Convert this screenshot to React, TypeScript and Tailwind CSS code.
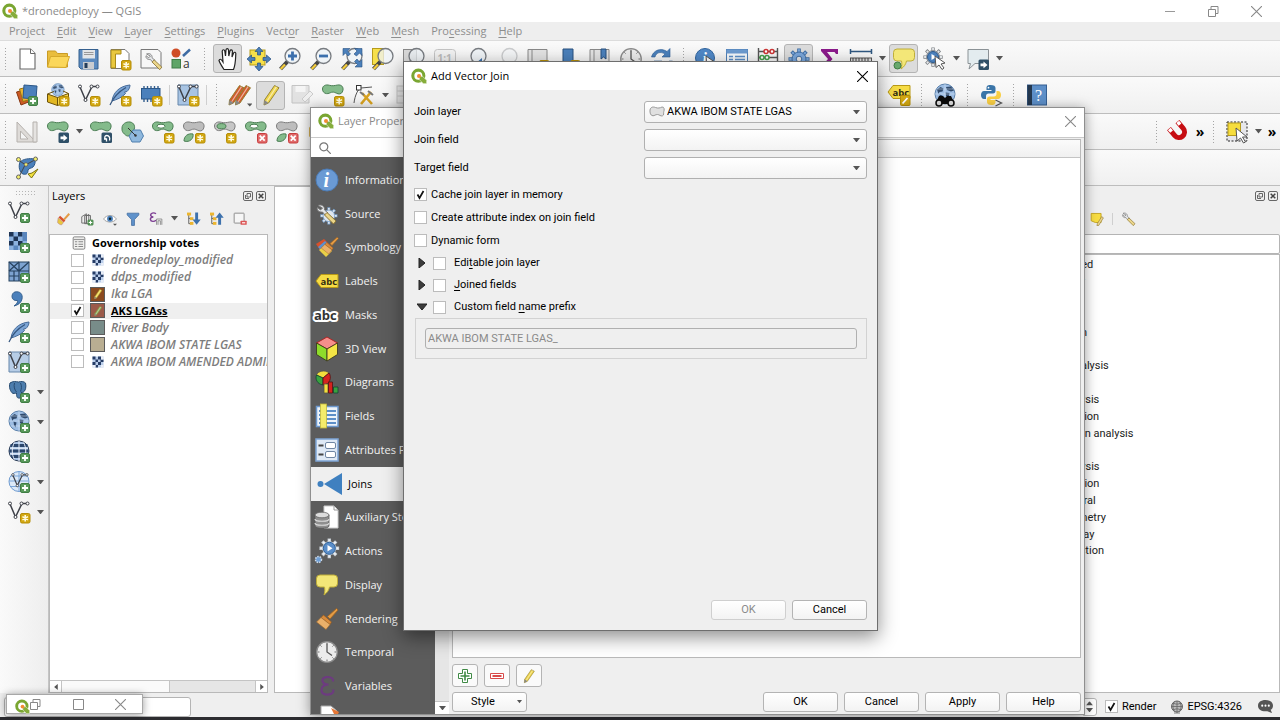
import React, { useState } from "react";

type Kids = { children?: React.ReactNode };

/* ---------- icon primitives ---------- */

function Svg({ children, cls = "size-6" }: Kids & { cls?: string }) {
  return (
    <svg viewBox="0 0 24 24" className={`${cls} shrink-0`} fill="none" aria-hidden="true">
      {children}
    </svg>
  );
}

const Plus = () => (
  <g>
    <rect x="13.5" y="13.5" width="9" height="9" rx="1.5" fill="#5a9a5c" stroke="#3f7d43" />
    <path d="M18 15v6M15 18h6" stroke="#fff" strokeWidth="1.8" />
  </g>
);
const Star = () => (
  <g>
    <rect x="13.5" y="13.5" width="9.5" height="9.5" rx="1.5" fill="#d3a812" stroke="#b58d07" />
    <path d="M18.2 15v6.4M15.4 16.6l5.6 3.2M21 16.6l-5.6 3.2" stroke="#fffbe0" strokeWidth="1.6" />
  </g>
);
const Cross = () => (
  <g>
    <rect x="13.5" y="13.5" width="9.5" height="9.5" rx="1.5" fill="#e06a6a" stroke="#c83c3c" />
    <path d="M15.7 15.7l5 5M20.7 15.7l-5 5" stroke="#fff" strokeWidth="1.8" />
  </g>
);
const ArrowBadge = () => (
  <g>
    <rect x="12.5" y="12.5" width="10.5" height="10.5" rx="1.5" fill="#2f5068" />
    <path d="M14.5 16.6h3v-2l4 3.3-4 3.3v-2h-3z" fill="#fff" />
  </g>
);

const Vee = () => (
  <g stroke="#3d4048" strokeWidth="1.5">
    <path d="M3 4l5.5 13L15 3.5h5" />
    <g fill="#fff" strokeWidth="1">
      <circle cx="3" cy="3.5" r="1.5" />
      <circle cx="8.5" cy="17" r="1.5" />
      <circle cx="14.5" cy="3.5" r="1.5" />
      <circle cx="20.5" cy="3.5" r="1.5" />
    </g>
  </g>
);
const Blob = ({ fill = "#84bb8b", stroke = "#4b7e54" }: { fill?: string; stroke?: string }) => (
  <path
    d="M1.500 6C1.500 2.500 5 1.300 8.500 2.300c3 .9 5.500.2 8-.3 4-.6 6 2 5.500 5s-2.500 4.500-5 3.800c-2.500-.8-4-2.300-6.500-1.500-1.800.6-3 1.500-5 1.300C3 10.300 1.500 8.500 1.500 6z"
    fill={fill}
    stroke={stroke}
  />
);
const Lens = ({ dim = false }: { dim?: boolean }) => (
  <g opacity={dim ? 0.35 : 1}>
    <path d="M9.500 14.500L2.500 22" stroke="#454545" strokeWidth="4" />
    <path d="M7 17.500L2.700 22" stroke="#f3cc3c" strokeWidth="2.400" />
    <circle cx="14.500" cy="9" r="7.500" fill="#eef3f7" fillOpacity=".75" stroke="#777b80" strokeWidth="1.300" />
  </g>
);
const Globe = ({ dark = false }: { dark?: boolean }) => (
  <g>
    <circle cx="12" cy="11" r="10" fill={dark ? "#a9c4e6" : "#9dbde3"} stroke={dark ? "#2b3d57" : "#5d83ad"} />
    {dark ? (
      <g>
        <path d="M3.500 5.500h17M2.300 11h19.400M4 16.500h16" stroke="#2b466c" strokeWidth="3" />
        <path d="M12 1v20M7.500 2.500c-3 5-3 12 0 17M16.500 2.500c3 5 3 12 0 17M3 8.200h18M3 13.800h18" stroke="#e9f0fa" strokeWidth="1" />
      </g>
    ) : (
      <g>
        <path d="M4 6.500l3.500-2.500 3 1.500-1 3-3 .5-1 2zM13 4l5-.5 3 4-3 1-4-1.500zM12.500 9.500l4 .5-1 5-2.500-2zM6.500 11.500l3 1-1 5-1.500-2.500z" fill="#314b6d" />
        <path d="M2 11h20M12 1v20M4 6h16M4 16h16" stroke="#dce8f6" strokeWidth=".5" />
      </g>
    )}
  </g>
);
const Feather = () => (
  <g>
    <path d="M4 18C5 10 11 3 22 2c0 3-1.500 5-3 6.500l-2.500.5 1 1.500C14 14.500 9 16.500 4 18z" fill="#7ba4d4" stroke="#456a99" />
    <path d="M2 22C5 15 11 8.500 18 4.500" stroke="#34557f" strokeWidth="1.200" />
  </g>
);
const Checks = () => (
  <g>
    <rect x="2" y="2" width="18" height="18" fill="#8db2df" />
    <path d="M2 2h4.500v4.500H2zM11 2h4.500v4.500H11zM6.500 6.500H11V11H6.500zM2 11h4.500v4.500H2zM11 11h4.500v4.500H11z" fill="#1f3555" />
    <path d="M15.500 2H20v9h-4.500zM6.500 15.500H11V20H6.500z" fill="#5a86bd" />
  </g>
);
const Pencil = ({ c = "#efd54b" }: { c?: string }) => (
  <g>
    <path d="M15.500 2.500l4.500 2.300L9.500 20 5 22l.5-5z" fill={c} stroke="#8f7d2e" strokeWidth=".9" />
    <path d="M17.500 3.700L7.500 19" stroke="#fff" strokeOpacity=".55" strokeWidth="1.200" />
    <path d="M5.500 17L5 22l4.500-2z" fill="#888" />
  </g>
);
const Wrench = () => (
  <g>
    <path d="M3 3.500c3-1.500 7 .5 6.500 4.500l3.500 3-2.500 2.500L7.500 10C4 10.500 1.500 8 2.500 5.500L5.500 8l2-2z" fill="#e4e6e8" stroke="#777" />
    <path d="M12 10.500l9 8.500-2.500 3-9-9z" fill="#ecd68a" stroke="#8a7434" />
  </g>
);
const Gear = ({ fill = "#7aa6da", stroke = "#3f6da3" }: { fill?: string; stroke?: string }) => (
  <g>
    <g stroke={stroke} strokeWidth="3.600">
      <path d="M12 1.500v21M1.500 12h21M4.600 4.600l14.800 14.800M19.400 4.600L4.600 19.400" />
    </g>
    <g stroke={fill} strokeWidth="2">
      <path d="M12 2.300v19.400M2.300 12h19.400M5.200 5.200l13.600 13.600M18.800 5.200L5.200 18.800" />
    </g>
    <circle cx="12" cy="12" r="7" fill={fill} stroke={stroke} />
  </g>
);
const Bubble = () => (
  <path
    d="M5 2h14q3.500 0 3.500 3.500v5q0 3.500-3.500 3.500h-4.500c-.5 3-2.500 6-5.500 8 1-3 1-5.500.5-8H5Q1.500 14 1.500 10.500v-5Q1.500 2 5 2z"
    fill="#f3e778"
    stroke="#bfae39"
  />
);
const Brush = () => (
  <g>
    <path d="M21.500 1.500L23 3l-8 9-2.500-2.500z" fill="#e39b45" stroke="#a0621d" strokeWidth=".8" />
    <path d="M8.500 8l8 7-1.500 2.500-9-7z" fill="#d98b3c" stroke="#94571a" strokeWidth=".6" />
    <path d="M6 10.500l9 7-4 5L1.500 15z" fill="#eab06a" stroke="#a56a29" strokeWidth=".6" />
  </g>
);
const Tag = () => (
  <g>
    <path d="M6 5.500h17v13H6L1 12z" fill="#f6dc45" stroke="#b99a17" />
    <text x="5.500" y="15.500" fontSize="9.500" fontWeight="700" fill="#322d12" fontFamily="Open Sans, sans-serif">abc</text>
  </g>
);
const Clock = () => (
  <g>
    <circle cx="12" cy="12" r="10.300" fill="#ececec" stroke="#8b8b8b" strokeWidth="1.200" />
    <path d="M12 3.500V12l5 3.500" stroke="#555" strokeWidth="1.300" />
    <path d="M12 2.500v2M12 19.500v2M2.500 12h2M19.500 12h2M5.300 5.300l1.300 1.300M18.700 5.300l-1.300 1.300M5.300 18.700l1.300-1.300M18.700 18.700l-1.300-1.300" stroke="#777" />
  </g>
);
const Page = () => <path d="M5 2h10.500L20 6.500V22H5z" fill="#fff" stroke="#666" strokeWidth="1.100" />;
const Cursor = () => <path d="M12 9l10 7-4 1 3 4-2 1.500-3-4.500-3 2.500z" fill="#fff" stroke="#555" strokeWidth="1" />;

function QLogo({ cls = "size-4" }: { cls?: string }) {
  return (
    <Svg cls={cls}>
      <circle cx="11" cy="11.500" r="8.300" stroke="#7aa632" strokeWidth="4.600" />
      <path d="M12.500 12.500h5l6 6v5h-5l-6-6z" fill="#86ad3b" stroke="#fff" strokeWidth=".8" />
      <circle cx="12" cy="12" r="3" fill="#f08c33" />
    </Svg>
  );
}

const icons: Record<string, React.ReactNode> = {
  page: (<g><Page /><path d="M15.500 2v4.500H20" fill="#fff" stroke="#666" /></g>),
  folder: (<g><path d="M1.500 4h8l2 2.500h10V20H1.500z" fill="#e9bd3d" stroke="#c99b25" /><path d="M1.500 20L4.500 9.500h19L20 20.500z" fill="#fbd75b" stroke="#d6a92c" /></g>),
  save: (<g><path d="M2 2.500h19V22H4l-2-2z" fill="#5b8abf" stroke="#35608f" /><rect x="5.500" y="3" width="12.500" height="8.500" fill="#e2e5e8" /><path d="M7 5.500h9.500M7 7.500h9.500" stroke="#999" /><rect x="6" y="15" width="11" height="7" fill="#c9ccd0" /><rect x="7.500" y="16" width="3" height="5" fill="#223c5a" /></g>),
  layoutNew: (<g><path d="M3 2.500h14l4 4V21.500H3z" fill="#fff" stroke="#777" /><path d="M3 3h10v4H7.500v14H3z" fill="#e9c83f" stroke="#a98b1b" /><Star /></g>),
  layouts: (<g><path d="M2 2.500h17l3 3V21H2z" fill="#f7f7f7" stroke="#777" /><g transform="translate(5 4) scale(.85)"><Wrench /></g></g>),
  style: (<g><circle cx="6" cy="6" r="4.500" fill="#cf4d26" /><path d="M13 9l7-6.500" stroke="#3e6ba3" strokeWidth="2.500" /><rect x="2" y="12.500" width="8.500" height="8.500" fill="#5fa568" stroke="#3e7c47" /><text x="13" y="21" fontSize="12" fill="#333" fontFamily="Open Sans, sans-serif">a</text></g>),
  hand: (<path d="M8 22.500c-2-3-4-6-5-9 .5-1.800 2-1.500 3 0l1 1.500-.8-11c.3-1.700 2.200-1.700 2.600 0L9.500 9 10 2.800c.3-1.700 2.200-1.600 2.500 0l.3 6.200L14 3.800c.5-1.500 2.300-1.200 2.400.3L16 10l1.600-4c.8-1.300 2.200-.8 2.200.6-.3 5 0 10-2.300 15.900z" fill="#fff" stroke="#222" strokeWidth="1.200" />),
  pan: (<g><rect x="3" y="3" width="15" height="15" fill="#f7e04a" stroke="#b69b1b" /><path d="M12 0l4 4.500h-2.500V8h-3V4.500H8zM12 24l4-4.500h-2.500V16h-3v3.500H8zM0 12l4.500-4v2.500H8v3H4.500V16zM24 12l-4.500-4v2.500H16v3h3.500V16z" fill="#4b80bb" stroke="#28507f" strokeWidth=".7" /></g>),
  zoomIn: (<g><Lens /><path d="M14.500 4.500v9M10 9h9" stroke="#3c70ad" strokeWidth="2.800" /></g>),
  zoomOut: (<g><Lens /><path d="M10 9h9" stroke="#3c70ad" strokeWidth="2.800" /></g>),
  zoomFull: (<g><Lens /><path d="M3 1.500h7L7.500 4l3 3L8 9 5.500 6 3 8.500zM22 1.500v7L19.500 6l-3 3L14 7l3-3-2.500-2.500zM22 20h-7l2.500-2.500-3-3L17 12l2.500 3 2.500-2.500z" fill="#4b80bb" stroke="#28507f" strokeWidth=".6" /></g>),
  zoomSel: (<g><rect x="1.500" y="1.500" width="11" height="16" fill="#f7e04a" stroke="#b69b1b" /><Lens /></g>),
  zoomLayer: (<g><rect x="1.500" y="2.500" width="13" height="15" fill="#d9d9d9" stroke="#888" /><Lens /></g>),
  zoomNative: (<g opacity=".45"><rect x="1.500" y="2.500" width="21" height="17" rx="3" fill="#eee" stroke="#888" /><text x="4.500" y="15" fontSize="10" fontWeight="700" fill="#777" fontFamily="Open Sans, sans-serif">1:1</text></g>),
  zoomLast: (<g><Lens /><path d="M12 16l6-5v3h5v5h-5v2z" fill="#3c70ad" /></g>),
  zoomNext: <Lens dim />,
  mapNew: (<g><path d="M2 2.500h19V22H2zM6 2.500V22" fill="#e3e3e3" stroke="#888" /><Star /></g>),
  bookNew: (<g><path d="M6 2h10v19l-5-4-5 4z" fill="#4b80bb" stroke="#28507f" /><Star /></g>),
  books: (<g><path d="M2 2.500h19V22H2zM6 2.500V22" fill="#e3e3e3" stroke="#888" /><path d="M13 2h5v10l-2.500-2-2.500 2z" fill="#4b80bb" stroke="#28507f" /></g>),
  clock: <Clock />,
  refresh: (<g fill="#4b80bb" stroke="#2d5c93" strokeWidth=".6"><path d="M1.500 10C3 4 10 0 17 4.500L20 1.500v8.500h-8l3-3C10 4 6 6 5 10z" /><path d="M22.500 14c-1.500 6-8.500 10-15.500 5.500L4 22.500V14h8l-3 3c5 3 9 1 10-3z" /></g>),
  identify: (<g><circle cx="11" cy="11" r="9.500" fill="#5088c7" stroke="#2f639d" /><text x="8.500" y="17" fontSize="16" fontStyle="italic" fontWeight="700" fill="#fff" fontFamily="Liberation Serif, serif">i</text><Cursor /></g>),
  table: (<g><rect x="1.500" y="2.500" width="21" height="19" fill="#f5f8fb" stroke="#4e80b8" /><path d="M1.500 2.500h21v4h-21z" fill="#6c9bd0" /><path d="M4 9.500h4M10 9.500h10M4 12.500h4M10 12.500h10M4 15.500h4M10 15.500h10M4 18.500h4M10 18.500h10" stroke="#5d8fc8" strokeWidth="1.600" /></g>),
  abacus: (<g><path d="M2.500 1v22M21.500 1v22M2.500 4.500h19M2.500 10.500h19M2.500 17h19" stroke="#555" strokeWidth="1.400" /><g fill="#fff" strokeWidth="1.500"><circle cx="10" cy="4.500" r="2" stroke="#cc3434" /><circle cx="16" cy="4.500" r="2" stroke="#cc3434" /><circle cx="6" cy="10.500" r="2" stroke="#47a04c" /><circle cx="11" cy="10.500" r="2" stroke="#47a04c" /><circle cx="16" cy="17" r="2" stroke="#4b80bb" /></g></g>),
  gear: (<g><Gear /><circle cx="12" cy="12" r="2.800" fill="#e8e8e8" stroke="#3f6da3" /></g>),
  sigma: (<path d="M3 2h17v5h-2l-1.500-2H9l5.500 7L8.500 19H17l2-2.500h2L19.500 22H3v-2l7-8-7-8z" fill="#8b1a8b" />),
  ruler: (<g><path d="M1.500 4.500h21M1.500 2v5M22.500 2v5" stroke="#2f5780" strokeWidth="1.500" /><rect x="1.500" y="11" width="21" height="8" fill="#ddd" stroke="#555" /><path d="M4 11v4M7 11v5M10 11v4M13 11v5M16 11v4M19 11v5" stroke="#444" /></g>),
  tip: (<g><Bubble /><circle cx="5.500" cy="18.500" r="3.500" fill="#69a96e" stroke="#3f7d43" /></g>),
  action: (<g><g transform="translate(-1 -1) scale(.92)"><Gear fill="#e4e7ea" stroke="#7c8084" /></g><circle cx="10" cy="10" r="5.500" fill="#4b80bb" stroke="#2b5788" /><path d="M8.500 7l5 3-5 3z" fill="#fff" /><Cursor /></g>),
  note: (<g><path d="M2 2.500h20.500v14H9L3 22l1.500-5.500H2z" fill="#e3ecef" stroke="#8b9296" /><ArrowBadge /></g>),
  dsm: (<g><path d="M1.500 9L12 6l4 12-10 4z" fill="#cc5a24" stroke="#873610" /><path d="M4.500 6L15 3.500l3 12-10 3z" fill="#e8b532" stroke="#9a7410" /><path d="M9 2l13 1-1 13-13-1z" fill="#4b80bb" stroke="#2b5788" /><Plus /></g>),
  gpkg: (<g><path d="M1.500 11l10 3.500v8l-10-3.500z" fill="#e2b722" stroke="#6c5207" /><path d="M11.500 14.500l11-4v8l-11 4z" fill="#f5d44b" stroke="#6c5207" /><g transform="translate(4.500 0) scale(.62)"><Globe /></g><path d="M1.500 11L8 8.500M22.500 10.500L17 8" stroke="#6c5207" /><Star /></g>),
  vNew: (<g><Vee /><Star /></g>),
  vAdd: (<g><Vee /><Plus /></g>),
  featherNew: (<g><Feather /><Star /></g>),
  featherAdd: (<g><Feather /><Plus /></g>),
  chip: (<g><path d="M5 3v16M8.500 3v16M12 3v16M15.500 3v16M19 3v16" stroke="#35608f" strokeWidth="1.400" /><rect x="2.500" y="5.500" width="18.500" height="10.500" fill="#4b80bb" stroke="#2b5788" /><Star /></g>),
  virtNew: (<g><path d="M2 2h20v20H2z" fill="#a8c4e3" stroke="#6787ab" /><Vee /><Star /></g>),
  virtAdd: (<g><path d="M2 2h20v20H2z" fill="#b7cde6" stroke="#6787ab" /><Vee /><Plus /></g>),
  pencils: (<g><g transform="translate(-4 0)"><Pencil c="#d05a2c" /></g><g transform="translate(2.500 0)"><Pencil c="#d05a2c" /></g><path d="M19 20.500h5.500l-2.700 3z" fill="#555" /></g>),
  pencil: <Pencil />,
  saveOff: (<g opacity=".45"><path d="M2 2.500h17V20H2z" fill="#ccc" stroke="#888" /><path d="M5.500 3h10v6h-10z" fill="#f3f3f3" /><path d="M12 16l8-8 3 3-8 8z" fill="#e8e8e8" stroke="#999" /></g>),
  polyNew: (<g><Blob /><Star /></g>),
  vertex: (<g><path d="M2 20C3 12 6 6 9 5l11-1" stroke="#555" /><rect x="4.500" y="2.500" width="4.500" height="4.500" fill="#fff" stroke="#333" /><path d="M19 9L9 21M10 10l10 11" stroke="#d9a320" strokeWidth="2.600" /><path d="M16 8l5 4M8 9l4 3" stroke="#777" strokeWidth="2" /></g>),
  tableOff: (<g opacity=".4"><rect x="2" y="3" width="20" height="17" fill="#ddd" stroke="#888" /><path d="M2 8h20M2 13h20" stroke="#888" /></g>),
  abcEdit: (<g><g transform="translate(0 -3)"><Tag /></g><rect x="13.500" y="12.500" width="9.500" height="10" rx="1" fill="#d3a812" stroke="#b58d07" /><path d="M15.500 20.500l5-5.500" stroke="#fff" strokeWidth="1.800" /></g>),
  metasearch: (<g><Globe /><path d="M3 19l3-6h4l2 2 2-2h4l3 6v2H3z" fill="#0c0c0c" /><circle cx="6" cy="20" r="3" fill="#ddd" stroke="#0c0c0c" strokeWidth="1.500" /><circle cx="18" cy="20" r="3" fill="#ddd" stroke="#0c0c0c" strokeWidth="1.500" /></g>),
  python: (<g><path d="M11.500 2C8 2 7.500 3.500 7.500 5v2h5v1H5C3 8 2 10 2 12s1 4 3 4h2v-3c0-1.500 1-2.500 2.500-2.500h4.500c1.500 0 2.500-1 2.500-2.500V5c0-2-1.500-3-5-3z" fill="#3a75a8" /><path d="M12.500 22c3.500 0 4-1.500 4-3v-2h-5v-1H19c2 0 3-2 3-4s-1-4-3-4h-1.500v3c0 1.500-1 2.500-2.500 2.500h-4.500C9 13.500 8 14.500 8 16v3c0 2 1.500 3 4.500 3z" fill="#f9cf45" /><path d="M16.500 17l6 3-6 3" stroke="#555" strokeWidth="1.300" /><circle cx="9.500" cy="4.700" r=".9" fill="#fff" /></g>),
  help: (<g><rect x="2.500" y="2" width="19" height="20" fill="#5d8fc8" stroke="#355f92" /><rect x="2.500" y="2" width="4.500" height="20" fill="#24384f" /><text x="10" y="18" fontSize="16" fill="#fff" fontFamily="Liberation Serif, serif">?</text></g>),
  setsq: (<g stroke="#b5b1ad"><path d="M2 2l19 20H2z" fill="#dedbd8" /><path d="M5.500 11l7.500 8H5.500z" fill="#f4f4f4" /><path d="M18 2h4v20h-4z" fill="#e5e3e1" /></g>),
  polyArrow: (<g><Blob /><ArrowBadge /></g>),
  polyTurn: (<g><Blob /><rect x="12.500" y="12.500" width="10.500" height="10.500" rx="1.500" fill="#2f5068" /><path d="M20.500 20.500c.8-3-.5-5-2.700-5-2 0-3 2.500-1 3.500M15 19h2.500v2.500" stroke="#fff" strokeWidth="1.300" /></g>),
  polySimplify: (<g><path d="M2 8c0-4 4-6.500 8-6s6 5 3.500 8.500S9 18 5.500 15 2 11 2 8z" fill="#84bb8b" stroke="#4b7e54" /><path d="M13 10h7.500l3 6-3.500 6h-8l-3-6z" fill="#8fb8dd" stroke="#4f7fae" /><path d="M8 8l7 7" stroke="#333" /><circle cx="15.500" cy="15.500" r="1.200" fill="#333" /></g>),
  ringNew: (<g><Blob /><ellipse cx="10" cy="6.200" rx="4" ry="2" fill="#fff" stroke="#4b7e54" /><Star /></g>),
  partNew: (<g><Blob fill="#bdbdbd" stroke="#7d7d7d" /><path d="M2 21c0-5 4-8 9-7 1 4-3 9-9 7z" fill="#84bb8b" stroke="#4b7e54" /><Star /></g>),
  ringFill: (<g><Blob fill="#c6c6c6" stroke="#7d7d7d" /><ellipse cx="8.500" cy="6.200" rx="4.500" ry="2.600" fill="#84bb8b" stroke="#4b7e54" /><Star /></g>),
  ringDel: (<g><Blob /><ellipse cx="10" cy="6.200" rx="4" ry="2" fill="#fff" stroke="#4b7e54" /><Cross /></g>),
  partDel: (<g><Blob fill="#bdbdbd" stroke="#7d7d7d" /><path d="M2 21c0-5 4-8 9-7 1 4-3 9-9 7z" fill="#84bb8b" stroke="#4b7e54" /><Cross /></g>),
  reshape: (<path d="M4 8c2-5 10-6 15-4v14c-5 4-13 2-15-2z" fill="#84bb8b" stroke="#c99b25" strokeWidth="1.500" />),
  magnet: (<g transform="rotate(-40 12 12)"><path d="M6.500 3v9a5.500 5.500 0 0 0 11 0V3" stroke="#c60d12" strokeWidth="5" /><path d="M6.500 3.500V7M17.500 3.500V7" stroke="#fff" strokeWidth="3.600" /></g>),
  select: (<g><rect x="2" y="2" width="20" height="19" fill="#e6e6ea" stroke="#222" strokeDasharray="2 1.500" /><rect x="3" y="3" width="12.500" height="12.500" fill="#f6dd3e" stroke="#b69b1b" /><path d="M11 8l11 9h-4.500l3 5-2 1-3-5-3.500 3z" fill="#fff" stroke="#555" /></g>),
  nodeTool: (<g><path d="M5 6c3-3 9-4 15-3 .5 3 0 6-2 8-2 1.500-4 1-5 3 0 3-1 5-5 4-3-1-5-7-3-12z" fill="#4b80bb" stroke="#2b5788" /><path d="M3.500 4l7 5 10-5.500M10 9l-6 12" stroke="#444" /><path d="M13 18l3.500 4L23 13l-6 4z" fill="#f3e23f" stroke="#7b7110" /><g fill="#f3ee6a" stroke="#666"><circle cx="3.500" cy="3.500" r="2" /><circle cx="20.500" cy="3" r="2" /><circle cx="3.500" cy="21" r="2" /><circle cx="11" cy="8.500" r="1.800" /></g></g>),
  rasterAdd: (<g><Checks /><Plus /></g>),
  meshAdd: (<g><rect x="2" y="2" width="20" height="19" fill="#7da3d1" stroke="#27425f" /><path d="M2 2l10 9M12 2L2 11M12 11l10-9M12 2v19M2 11h20M12 16H2M7 11v10" stroke="#27425f" strokeWidth="1.200" /><Plus /></g>),
  commaAdd: (<g><path d="M8 2c5-1 8 2 7 7-1 4-4 6-8 7 3-2 4-4 3.500-5.500C7 11 5 9 5 6.500 5 4 6.500 2.300 8 2z" fill="#4b80bb" stroke="#35608f" /><Plus /></g>),
  pgAdd: (<g><path d="M3 3c3-2 6-1.500 8.500-1 3-1 5.500-.5 7 1 1 4 0 8-2.500 9.500L14.500 12c0 2 0 5-1.500 6-3 .5-3.500-1-3.500-5L6 13.500C3.500 12 1.500 7 3 3z" fill="#4d7dad" stroke="#274b71" /><path d="M7.500 3c-1 3 0 7 2 9M13.500 3c1.500 3 1 6 0 8.500" stroke="#274b71" /><Plus /></g>),
  globeAdd: (<g><Globe /><Plus /></g>),
  wcsAdd: (<g><Globe dark /><Plus /></g>),
  wfsAdd: (<g><circle cx="12" cy="11.500" r="10" fill="#dce9f8" stroke="#6f9bd0" /><path d="M2 11h20M12 1.500v20M4 6h16M4 16.500h16" stroke="#7ba6da" /><g transform="translate(3.500 2) scale(.8)"><Vee /></g><Plus /></g>),
  /* properties sidebar */
  info: (<g><circle cx="12" cy="12" r="11" fill="#6a9ad4" stroke="#4c7bb5" /><text x="8.500" y="19" fontSize="20" fontStyle="italic" fontWeight="700" fill="#fff" fontFamily="Liberation Serif, serif">i</text></g>),
  source: (<g><g transform="translate(4 4) scale(.82)"><Gear fill="#dfe6ee" stroke="#7ba0c9" /></g><Wrench /></g>),
  symbology: (<g><path d="M1 9l8-5 6 6-8 8z" fill="#d8502b" /><path d="M4 15l6-5 7 6-6 6z" fill="#e9cf47" /><path d="M3 12l7-6 2 2-7 6z" fill="#5b8fd0" /><g transform="translate(5 1) scale(.8)"><Brush /></g></g>),
  labels: <Tag />,
  masks: (<text x="-1" y="16.500" fontSize="13" fontWeight="700" fill="#333" stroke="#fff" strokeWidth="4" paintOrder="stroke" strokeLinejoin="round" fontFamily="Open Sans, sans-serif">abc</text>),
  cube: (<g stroke="#3a3a20" strokeWidth=".9"><path d="M12 0l10.500 6L12 12 1.500 6z" fill="#f58f8b" stroke="#b01c1c" /><path d="M1.500 6L12 12v12L1.500 17.500z" fill="#8edc2b" /><path d="M22.500 6L12 12v12l10.500-6.500z" fill="#f3e545" /></g>),
  diagrams: (<g strokeWidth=".8"><path d="M8 8L1.500 5C3 1 10-.5 14 3z" fill="#f4de3c" stroke="#554" /><path d="M8 8L1.500 5C0 9 2 14 8 15z" fill="#39a23f" stroke="#143" /><path d="M8 8l6-5c3 4 1 12-6 12z" fill="#d5231e" stroke="#511" /><path d="M9 14h4v9H9z" fill="#f4de3c" stroke="#554" /><path d="M13.500 12h4v11h-4z" fill="#d5231e" stroke="#511" /><path d="M18.500 17H23v6h-4.500z" fill="#39a23f" stroke="#143" /></g>),
  fields: (<g><rect x="1.500" y="2.500" width="21.500" height="20" fill="#eef4fa" stroke="#6d98cd" strokeWidth="1.500" /><path d="M4 7h17M4 11h17M4 15h17M4 19h17" stroke="#5d8fc8" strokeWidth="2" /><rect x="5.500" y="0" width="6" height="24" fill="#f4ec6b" stroke="#c4b838" strokeWidth=".8" /></g>),
  form: (<g><rect x="1" y="1" width="22" height="22" fill="#dfe9f5" stroke="#7ea5d6" strokeWidth="1.500" /><path d="M3.500 7.500h5M3.500 16.500h5" stroke="#444" strokeWidth="1.800" /><rect x="10.500" y="4.500" width="10" height="6" rx="1.500" fill="#fff" stroke="#6f86a3" /><rect x="10.500" y="13.500" width="10" height="6" rx="1.500" fill="#fff" stroke="#6f86a3" /></g>),
  joins: (<g><circle cx="5.500" cy="12" r="3" fill="#3f80c0" /><path d="M9 12L27 1v22z" fill="#3f80c0" /></g>),
  aux: (<g><path d="M9 1h10l4 4v18H9z" fill="#fff" stroke="#ccc" /><path d="M19 1v4h4" stroke="#999" /><path d="M0 10v11c0 3 14 3 14 0V10z" fill="#8f8f8f" stroke="#555" strokeWidth=".8" /><ellipse cx="7" cy="10" rx="7" ry="2.800" fill="#dcdcdc" stroke="#666" strokeWidth=".8" /><path d="M0 14c0 3 14 3 14 0M0 18c0 3 14 3 14 0" stroke="#ddd" strokeWidth="1.200" /></g>),
  actions: (<g><g transform="translate(3 -2) scale(.94)"><Gear fill="#eef1f4" stroke="#c2c8ce" /></g><circle cx="14.300" cy="9.300" r="6" fill="#5a8dc8" stroke="#2f639d" /><path d="M12.500 6l5 3.300-5 3.300z" fill="#fff" /><circle cx="3.500" cy="20.500" r="3" fill="#6f9fd6" stroke="#cfd9e4" strokeWidth="1.500" strokeDasharray="1.500 1" /></g>),
  display: <g><Bubble /></g>,
  rendering: <Brush />,
  temporal: <Clock />,
  variables: (<path d="M18 5C14 1.500 7 3 7.500 7c.5 3 3.500 3.500 6 3.500-4 .2-7 2-7 5.500 0 5.500 8.500 6 12 2M18 5v2.500M18.500 18l-.5-2.500" stroke="#6d3b80" strokeWidth="2.200" />),
  meta: (<g><path d="M4 3h10l6 5v15H4z" fill="#fff" stroke="#aaa" /><path d="M14 5l8 4-3 6z" fill="#e57635" /></g>),
  /* panel toolbars */
  brushSmall: (<g><path d="M2 10l9 8-3 4c-3 0-6-2-7-4z" fill="#e9c83f" stroke="#b88" /><path d="M4 8l9 8" stroke="#d8502b" strokeWidth="4" /><path d="M12 13l9-10" stroke="#e39b45" strokeWidth="3.500" /></g>),
  group: (<g><path d="M3 8l8-5v16H3zM8 6h10v14H8z" fill="#eee" stroke="#666" strokeWidth="1.500" /><path d="M11 20V7l4-3v12" stroke="#666" strokeWidth="1.500" /><Plus /></g>),
  eye: (<g><path d="M1 12C6 4 18 4 23 12c-5 7-17 7-22 0z" fill="#fff" stroke="#999" strokeWidth="1.500" /><circle cx="12" cy="11.500" r="5" fill="#4b80bb" /><circle cx="12" cy="11.500" r="2" fill="#122" /><path d="M17 20h7l-3.500 3.500z" fill="#555" /></g>),
  funnel: (<path d="M2 2h20v3l-7.500 8v10H9.500V13L2 5z" fill="#5f92cb" stroke="#3a6699" strokeWidth="1.200" />),
  expr: (<g><path d="M12 3C8 0 2 2 3 6c.5 2 3 2.500 4.500 2.500C4.500 8.500 2 10 2.500 13c.5 4 7 4 9.500 1" stroke="#7d3f93" strokeWidth="2.400" /><path d="M13 22V12h9v10M15.500 22v-7h4v7" stroke="#888" strokeWidth="1.500" /></g>),
  expand: (<g><path d="M3 3v17h5M3 11h5" stroke="#555" strokeWidth="1.500" /><rect x="0" y="1" width="7" height="5" fill="#edb62e" /><rect x="5" y="9" width="6" height="5" fill="#edb62e" /><rect x="5" y="17" width="6" height="5" fill="#edb62e" /><path d="M14 1h5v12h4.500l-7 9-7-9H14z" fill="#3e72ad" /></g>),
  collapse: (<g><path d="M3 3v17h5M3 11h5" stroke="#555" strokeWidth="1.500" /><rect x="0" y="1" width="7" height="5" fill="#edb62e" /><rect x="5" y="9" width="6" height="5" fill="#edb62e" /><rect x="5" y="17" width="6" height="5" fill="#edb62e" /><path d="M14 22h5V10h4.500l-7-9-7 9H14z" fill="#3e72ad" /></g>),
  remove: (<g><rect x="2" y="2" width="17" height="17" rx="1" fill="#f6f6f6" stroke="#888" strokeWidth="1.600" /><rect x="13" y="15" width="10.500" height="7" rx="1" fill="#dd5555" /><path d="M15.500 18.500h5.500" stroke="#fff" strokeWidth="2" /></g>),
  notePen: (<g><path d="M2 2.500h17V18H9l-7-3z" fill="#f8dd42" stroke="#c2a11c" strokeWidth="1.500" /><path d="M20 8l3 2-8 13-3 1 .5-4z" fill="#ecd68a" stroke="#8a7434" /></g>),
  wrench: <Wrench />,
  sheet: (<g><rect x="2" y="1.500" width="20" height="21" rx="2" fill="#f2f2f0" stroke="#777" strokeWidth="1.500" /><path d="M2.500 6h19" stroke="#999" strokeWidth="2" /><path d="M5 10h4M11 10h8M5 14h4M11 14h8M5 18h4M11 18h8" stroke="#888" strokeWidth="1.800" /></g>),
  checks: (<g><rect x="1" y="1" width="22" height="22" fill="#b9cdea" /><path d="M1 1h6v6H1zM12 1h6v6h-6zM7 7h5v5H7zM17 7h6v5h-6zM1 12h6v6H1zM12 12h6v6h-6zM7 18h5v5H7z" fill="#263d66" /><path d="M18 1h5v6h-5zM18 18h5v5h-5zM1 18h6v5H1z" fill="#e9eef7" /></g>),
};

function Icon({ n, cls = "size-6" }: { n: string; cls?: string }) {
  return <Svg cls={cls}>{icons[n]}</Svg>;
}

/* ---------- small controls ---------- */

function Caret({ cls = "w-[7px]" }: { cls?: string }) {
  return (
    <svg viewBox="0 0 8 5" className={`${cls} shrink-0`} aria-hidden="true">
      <path d="M0 0h8L4 5z" fill="#555" />
    </svg>
  );
}
const Drop = () => (
  <button aria-label="More options" className="flex h-7 w-3 shrink-0 items-center justify-center">
    <Caret />
  </button>
);
function Grip({ cls = "w-[15px]" }: { cls?: string }) {
  return (
    <span className={`flex shrink-0 justify-center ${cls}`}>
      <span className="h-6 w-1 bg-[radial-gradient(#a5a5a5_35%,transparent_40%)] bg-[size:3px_3px]" />
    </span>
  );
}
const Sep = () => (
  <span className="flex w-[6px] shrink-0 justify-center">
    <span className="h-5 w-px bg-[#cfcfcf]" />
  </span>
);
function Tool({ n, on = false }: { n: string; on?: boolean }) {
  return (
    <span className="flex w-[31px] shrink-0 justify-center">
      <button
        aria-label={n}
        aria-pressed={on}
        className={`flex size-[29px] items-center justify-center rounded-[3px] border ${on ? "border-[#b4b4b4] bg-[#dcdcdc]" : "border-transparent"}`}
      >
        <Icon n={n} />
      </button>
    </span>
  );
}
const Tools = ({ names }: { names: string[] }) => (
  <>
    {names.map((n) => (
      <Tool key={n} n={n} />
    ))}
  </>
);

function Check({ id, on = false, label }: { id: string; on?: boolean; label?: string }) {
  const [value, setValue] = useState(on);
  return (
    <span className="grid shrink-0">
      <input
        id={id}
        type="checkbox"
        aria-label={label}
        checked={value}
        onChange={() => setValue(!value)}
        className="peer col-start-1 row-start-1 size-[13px] appearance-none border border-[#bcbcbc] bg-white"
      />
      <svg viewBox="0 0 13 13" className="pointer-events-none invisible col-start-1 row-start-1 size-[13px] peer-checked:visible" aria-hidden="true">
        <path d="M3.500 6.500l2 3.500L9.500 3" fill="none" stroke="#111" strokeWidth="1.700" />
      </svg>
    </span>
  );
}

const compact = "font-['Roboto','Noto_Sans',sans-serif]";

function Push({ children, off = false }: Kids & { off?: boolean }) {
  return (
    <button
      disabled={off}
      className={`flex h-5 w-[75px] shrink-0 items-center justify-center rounded-[3px] border bg-linear-to-b from-white to-[#f3f3f3] ${off ? "border-[#cfcfcf] text-[#8a8a8a]" : "border-[#b4b4b4]"}`}
    >
      {children}
    </button>
  );
}

const XMark = ({ cls }: { cls: string }) => (
  <svg viewBox="0 0 10 10" className={`size-[11px] ${cls}`} fill="none" stroke="currentColor" aria-hidden="true">
    <path d="M0 0l10 10M10 0L0 10" />
  </svg>
);

function DockButtons() {
  return (
    <span className="flex gap-[3px]">
      <button aria-label="Float panel">
        <svg viewBox="0 0 10 10" className="size-[10px]" fill="none" stroke="#666">
          <rect x=".5" y=".5" width="9" height="9" rx="1.500" />
          <path d="M4 2.500h3.500V6H4zM2.500 4v3.500H6" />
        </svg>
      </button>
      <button aria-label="Close panel">
        <svg viewBox="0 0 10 10" className="size-[10px]" fill="none" stroke="#666">
          <rect x=".5" y=".5" width="9" height="9" rx="1.500" />
          <path d="M2.700 2.700l4.600 4.600M7.300 2.700L2.700 7.300" strokeWidth="1.500" stroke="#444" />
        </svg>
      </button>
    </span>
  );
}

/* A label with one underlined mnemonic letter. */
function Mnemonic({ text, at }: { text: string; at: number }) {
  return (
    <>
      {text.slice(0, at)}
      <span className="underline underline-offset-2">{text[at]}</span>
      {text.slice(at + 1)}
    </>
  );
}

/* ---------- main window ---------- */

const menus: [string, number][] = [
  ["Project", 3], ["Edit", 0], ["View", 0], ["Layer", 0], ["Settings", 0], ["Plugins", 0],
  ["Vector", 4], ["Raster", 0], ["Web", 0], ["Mesh", 0], ["Processing", 3], ["Help", 0],
];

const bar = "flex shrink-0 items-center border-b border-[#bdbdbd] bg-linear-to-b from-[#fafafa] to-[#f0f0f0]";

function TopBars() {
  return (
    <header>
      <div className="flex h-[22px] items-center bg-white pr-[18px] pl-[2px] text-[#8a8a8a]">
        <QLogo />
        <span className="ml-1 grow">*dronedeployy — QGIS</span>
        <button aria-label="Minimize" className="mr-8 flex size-[11px] items-center">
          <span className="h-px w-[10px] bg-[#999]" />
        </button>
        <button aria-label="Restore" className="mr-8">
          <svg viewBox="0 0 11 11" className="size-[11px]" fill="none" stroke="#888">
            <path d="M.5 3.500h7v7h-7zM3 3V.5h7v7H8" />
          </svg>
        </button>
        <button aria-label="Close">
          <XMark cls="text-[#888]" />
        </button>
      </div>
      <nav className="flex h-[19px] items-center gap-3 border-b border-[#dcdcdc] bg-[#eee] pl-[9px] text-[#8d8d8d]">
        {menus.map(([t, at]) => (
          <button key={t} className="shrink-0">
            <Mnemonic text={t} at={at} />
          </button>
        ))}
      </nav>
      <div className={`${bar} h-9`}>
        <Grip cls="w-[11px]" />
        <Tools names={["page", "folder", "save", "layoutNew", "layouts", "style"]} />
        <Grip />
        <Tool n="hand" on />
        <Tools names={["pan", "zoomIn", "zoomOut", "zoomFull", "zoomSel", "zoomLayer", "zoomNative", "zoomLast", "zoomNext", "mapNew", "bookNew", "books", "clock", "refresh"]} />
        <Grip cls="w-[13px]" />
        <Tools names={["identify", "table", "abacus"]} />
        <Tool n="gear" on />
        <Tools names={["sigma", "ruler"]} />
        <Drop />
        <Tool n="tip" on />
        <Tool n="action" />
        <Drop />
        <Tool n="note" />
        <Drop />
      </div>
      <div className={`${bar} h-[37px]`}>
        <Grip cls="w-[11px]" />
        <Tools names={["dsm", "gpkg", "vNew", "featherNew", "chip"]} />
        <Sep />
        <Tool n="virtNew" />
        <Sep />
        <Grip />
        <Tool n="pencils" />
        <Tool n="pencil" on />
        <Tools names={["saveOff", "polyNew", "vertex"]} />
        <Drop />
        <Tool n="tableOff" />
        <span className="w-[461px] shrink-0" />
        <Tool n="abcEdit" />
        <Grip />
        <Tool n="metasearch" />
        <Grip />
        <Tool n="python" />
        <Grip />
        <Tool n="help" />
      </div>
      <div className={`${bar} h-9`}>
        <Grip cls="w-[11px]" />
        <Tools names={["setsq", "polyArrow"]} />
        <Drop />
        <Tools names={["polyTurn", "polySimplify", "ringNew", "partNew", "ringFill", "ringDel", "partDel", "reshape"]} />
        <span className="grow" />
        <Grip cls="w-3" />
        <Tool n="magnet" />
        <button aria-label="More snapping tools" className="w-3 text-sm font-bold text-black">»</button>
        <Grip />
        <Tool n="select" />
        <Drop />
        <button aria-label="More selection tools" className="w-4 text-sm font-bold text-black">»</button>
      </div>
      <div className={`${bar} h-9`}>
        <Grip cls="w-[11px]" />
        <Tool n="nodeTool" />
      </div>
    </header>
  );
}

const sideTools: [string, boolean][] = [
  ["vAdd", false], ["rasterAdd", false], ["meshAdd", false], ["commaAdd", false], ["featherAdd", false],
  ["virtAdd", false], ["pgAdd", true], ["globeAdd", true], ["wcsAdd", false], ["wfsAdd", true], ["vNew", true],
];

function SideBar() {
  return (
    <aside className="flex w-[49px] shrink-0 flex-col border-r border-[#c4c4c4] bg-linear-to-r from-[#fafafa] to-[#eee] pl-[3px]">
      <span className="mt-1 ml-3 h-[7px] w-5 bg-[radial-gradient(#b5b5b5_35%,transparent_40%)] bg-[size:3px_3px]" />
      {sideTools.map(([n, more]) => (
        <div key={n} className="flex h-[30px] shrink-0 items-center">
          <Tool n={n} />
          {more && <Drop />}
        </div>
      ))}
    </aside>
  );
}

type Layer = { name: string; icon?: string; color?: string; pen?: string; state: "table" | "off" | "on" };
const layers: Layer[] = [
  { name: "Governorship votes", icon: "sheet", state: "table" },
  { name: "dronedeploy_modified", icon: "checks", state: "off" },
  { name: "ddps_modified", icon: "checks", state: "off" },
  { name: "Ika LGA", color: "bg-[#8b4a1f]", pen: "#efd54b", state: "off" },
  { name: "AKS LGAss", color: "bg-[#9b5a4a]", pen: "#8fae62", state: "on" },
  { name: "River Body", color: "bg-[#788c89]", state: "off" },
  { name: "AKWA IBOM STATE LGAS", color: "bg-[#b9ae92]", state: "off" },
  { name: "AKWA IBOM AMENDED ADMIN", icon: "checks", state: "off" },
];

function LayersPanel() {
  return (
    <section className="flex w-[219px] shrink-0 flex-col">
      <div className="flex h-5 items-center justify-between pr-[2px] pl-[3px] text-black">
        <h2>Layers</h2>
        <DockButtons />
      </div>
      <div className="flex h-[28px] items-center gap-[9px] pb-[3px] pl-2">
        {["brushSmall", "group", "eye", "funnel", "expr"].map((n) => (
          <button key={n} aria-label={n}>
            <Icon n={n} cls="size-[14px]" />
          </button>
        ))}
        <span className="-ml-px flex"><Caret /></span>
        {["expand", "collapse", "remove"].map((n) => (
          <button key={n} aria-label={n}>
            <Icon n={n} cls="size-[14px]" />
          </button>
        ))}
      </div>
      <div className="flex min-h-0 grow flex-col border border-[#b9b9b9] bg-white">
        <div className="min-h-0 grow overflow-hidden">
          <ul className="flex h-[135px] flex-col">
            {layers.map((l) => (
              <li key={l.name} className={`flex flex-1 items-center gap-[6px] whitespace-nowrap ${l.state === "on" ? "bg-[#efefef]" : ""} ${l.state === "table" ? "pl-[22px]" : "pl-[21px]"}`}>
                {l.state === "table" ? (
                  <Icon n="sheet" cls="size-[14px]" />
                ) : (
                  <>
                    <Check id={`layer-${l.name}`} on={l.state === "on"} label={l.name} />
                    {l.icon ? (
                      <span className="flex w-[15px] shrink-0 justify-center"><Icon n={l.icon} cls="size-3" /></span>
                    ) : (
                      <span className={`flex size-[15px] items-center justify-center border border-[#5b5b5b] ${l.color}`}>
                        {l.pen && <Svg cls="size-3"><Pencil c={l.pen} /></Svg>}
                      </span>
                    )}
                  </>
                )}
                <span className={l.state === "off" ? "text-xs font-semibold text-[#7d7d7d] italic" : l.state === "on" ? "font-bold text-black underline" : "font-bold text-black"}>
                  {l.name}
                </span>
              </li>
            ))}
          </ul>
        </div>
        <div className="flex h-3 shrink-0 border-t border-[#c4c4c4] bg-[#e6e6e6]">
          <button aria-label="Scroll left" className="flex w-3 items-center justify-center border-r border-[#c4c4c4] bg-white">
            <Caret cls="w-[6px] rotate-90" />
          </button>
          <span className="w-[108px] border-r border-[#c4c4c4] bg-[#fafafa]" />
          <button aria-label="Scroll right" className="ml-auto flex w-3 items-center justify-center border-l border-[#c4c4c4] bg-white">
            <Caret cls="w-[6px] -rotate-90" />
          </button>
        </div>
      </div>
    </section>
  );
}

const algorithms = [
  "Recently used", "Cartography", "Database", "File tools", "Interpolation", "Layer tools", "Network analysis",
  "Plots", "Raster analysis", "Raster creation", "Raster terrain analysis", "Raster tools", "Vector analysis",
  "Vector creation", "Vector general", "Vector geometry", "Vector overlay", "Vector selection",
];

function Toolbox() {
  return (
    <section className="ml-[5px] flex w-[300px] shrink-0 flex-col">
      <div className="flex h-5 items-center justify-end pr-[2px]">
        <DockButtons />
      </div>
      <div className="flex h-[28px] items-center justify-end gap-2 pr-[143px] pb-[3px]">
        <button aria-label="Edit in place"><Icon n="notePen" cls="size-[14px]" /></button>
        <span className="h-3 w-px bg-[#cfcfcf]" />
        <button aria-label="Options"><Icon n="wrench" cls="size-[16px]" /></button>
      </div>
      <input aria-label="Search algorithms" className="h-5 shrink-0 rounded-[2px] border border-[#b4b4b4] bg-white px-2" />
      <div className="min-h-0 grow overflow-hidden border border-[#b9b9b9] bg-white">
        <ul className={`mt-[2px] ml-[44px] flex h-[303px] flex-col text-[#222] ${compact}`}>
          {algorithms.map((a) => (
            <li key={a} className="flex flex-1 items-center whitespace-nowrap">{a}</li>
          ))}
        </ul>
      </div>
    </section>
  );
}

function StatusBar() {
  return (
    <footer className={`flex h-6 shrink-0 items-center justify-end pt-[3px] pr-[7px] text-black ${compact}`}>
      <input aria-label="Type to locate" className="mr-auto ml-1 h-5 w-[187px] rounded-[3px] border border-[#b4b4b4] bg-white px-2" />
      <span className="mr-2 flex h-[18px] w-[14px] flex-col items-center justify-center gap-[3px] rounded-r-[3px] border border-[#b4b4b4] bg-white">
        <Caret cls="w-[7px] rotate-180" />
        <Caret />
      </span>
      <Check id="render" on />
      <label htmlFor="render" className="ml-1">Render</label>
      <button className="ml-[14px] flex items-center gap-[3px]">
        <svg viewBox="0 0 14 14" className="size-[14px]" fill="none" stroke="#666" aria-hidden="true">
          <circle cx="7" cy="6.500" r="5.500" fill="#bbb" />
          <path d="M1 6.500h12M7 1v12M3 3c3 1.500 5 1.500 8 0M3 10c3-1.500 5-1.500 8 0M4.500 1.500c-2 3-2 7 0 10M9.500 1.500c2 3 2 7 0 10M4 13h6" strokeWidth=".8" />
        </svg>
        EPSG:4326
      </button>
      <button aria-label="Messages" className="ml-4">
        <svg viewBox="0 0 16 14" className="w-[15px]" aria-hidden="true">
          <path d="M8 0c5 0 8 2.500 8 6 0 2-1 3.500-2.500 4.500L15 14l-5-2H8c-5 0-8-2.500-8-6s3-6 8-6z" fill="#555" />
          <circle cx="4.500" cy="6" r="1.100" fill="#fff" /><circle cx="8" cy="6" r="1.100" fill="#fff" /><circle cx="11.500" cy="6" r="1.100" fill="#fff" />
        </svg>
      </button>
    </footer>
  );
}

/* ---------- layer properties window ---------- */

const tabs: [string, string][] = [
  ["info", "Information"], ["source", "Source"], ["symbology", "Symbology"], ["labels", "Labels"], ["masks", "Masks"],
  ["cube", "3D View"], ["diagrams", "Diagrams"], ["fields", "Fields"], ["form", "Attributes Form"], ["joins", "Joins"],
  ["aux", "Auxiliary Storage"], ["actions", "Actions"], ["display", "Display"], ["rendering", "Rendering"],
  ["temporal", "Temporal"], ["variables", "Variables"],
];

const iconButton = "flex h-[23px] w-[26px] items-center justify-center rounded-[3px] border border-[#b4b4b4] bg-[#fafafa]";

function LayerProperties() {
  return (
    <section className="absolute top-[107px] left-[310px] flex h-[608px] w-[775px] flex-col border border-[#8f8f8f] bg-[#efefef] text-black shadow-[0_2px_12px_rgba(0,0,0,0.4)]">
      <div className="flex h-[29px] shrink-0 items-center justify-between bg-white pr-2 pb-[3px] pl-[7px]">
        <span className="flex items-center gap-1">
          <QLogo />
          <h2 className="w-[68px] overflow-hidden whitespace-nowrap text-[#8a8a8a]">Layer Properties</h2>
        </span>
        <button aria-label="Close"><XMark cls="text-[#888]" /></button>
      </div>
      <div className="flex min-h-0 grow border-t border-[#c9c9c9]">
        <nav className="flex w-[124px] shrink-0 flex-col overflow-hidden bg-[#5c5c5c] text-[#f2f2f2]">
          <div className="flex h-[19px] shrink-0 items-center bg-white pl-2">
            <svg viewBox="0 0 12 12" className="size-3 shrink-0" fill="none" stroke="#777" strokeWidth="1.200" aria-hidden="true">
              <circle cx="4.800" cy="4.800" r="4" /><path d="M7.800 7.800l4 4" />
            </svg>
            <input aria-label="Search properties" className="ml-1 w-full min-w-0" />
          </div>
          <div className="mt-[6px] flex h-[540px] shrink-0 flex-col">
            {tabs.map(([n, t]) => (
              <button key={t} className={`flex flex-1 items-center whitespace-nowrap pl-1 ${t === "Joins" ? "gap-[9px] bg-[#efefef] text-black" : "gap-[6px]"}`}>
                <Svg cls="size-6 overflow-visible">{icons[n]}</Svg>
                {t}
              </button>
            ))}
          </div>
          <div className="flex h-9 shrink-0 items-start pl-[6px]"><Icon n="meta" /></div>
        </nav>
        <div className="flex w-[14px] shrink-0 flex-col justify-end bg-[#e6e6e6]">
          <button aria-label="Scroll down" className="flex h-[13px] items-center justify-center border-t border-[#c4c4c4] bg-white">
            <Caret />
          </button>
        </div>
        <div className={`flex min-w-0 grow flex-col pt-px pr-[3px] pl-[3px] ${compact}`}>
          <div className="flex min-h-0 grow flex-col border border-[#b9b9b9] bg-white">
            <div className="h-[18px] shrink-0 border-b border-[#c4c4c4] bg-linear-to-b from-[#fbfbfb] to-[#f0f0f0]" />
          </div>
          <div className="mt-[6px] flex shrink-0 gap-[6px]">
            <button aria-label="Add join" className={iconButton}>
              <svg viewBox="0 0 14 14" className="size-[14px]" fill="#fff" stroke="#3f8a45"><path d="M4.500.5h5v4h4v5h-4v4h-5v-4h-4v-5h4z" /><path d="M7 2.500v9M2.500 7h9" strokeWidth="1.600" /></svg>
            </button>
            <button aria-label="Remove join" className={iconButton}>
              <svg viewBox="0 0 14 14" className="size-[14px]" fill="#fff" stroke="#d84a4a"><path d="M.5 4.500h13v5H.5z" /><path d="M2.500 7h9" strokeWidth="2" /></svg>
            </button>
            <button aria-label="Edit join" className={iconButton}>
              <Icon n="pencil" cls="size-4" />
            </button>
          </div>
          <div className="mt-[5px] mb-[2px] flex shrink-0 gap-[6px]">
            <button className="mr-auto flex h-5 w-[75px] items-center rounded-[3px] border border-[#b4b4b4] bg-linear-to-b from-white to-[#f3f3f3] pr-1 pl-[18px]">
              <span className="grow text-left">Style</span>
              <Caret cls="w-[5px]" />
            </button>
            <Push>OK</Push>
            <Push>Cancel</Push>
            <Push>Apply</Push>
            <Push>Help</Push>
          </div>
        </div>
      </div>
    </section>
  );
}

/* ---------- add vector join dialog ---------- */

function Combo({ id, label, value, icon }: { id: string; label: string; value: string; icon?: React.ReactNode }) {
  return (
    <div className="flex h-[22px] items-center">
      <label htmlFor={id} className="grow">{label}</label>
      <span className="grid w-[223px] items-center">
        <select id={id} defaultValue={value} className={`col-start-1 row-start-1 h-[22px] w-full appearance-none rounded-[3px] border border-[#b0b0b0] bg-linear-to-b from-white to-[#f3f3f3] ${icon ? "pl-[22px]" : "pl-2"}`}>
          <option value={value}>{value}</option>
        </select>
        {icon && <span className="pointer-events-none col-start-1 row-start-1 ml-[5px]">{icon}</span>}
        <span className="pointer-events-none col-start-1 row-start-1 mr-[7px] justify-self-end"><Caret /></span>
      </span>
    </div>
  );
}

const TickRow = ({ id, text, on }: { id: string; text: string; on?: boolean }) => (
  <div className="flex h-[23px] items-center gap-1">
    <Check id={id} on={on} />
    <label htmlFor={id}>{text}</label>
  </div>
);

const FoldRow = ({ id, text, at, open = false }: { id: string; text: string; at: number; open?: boolean }) => (
  <div className="flex h-[22px] items-center">
    <button aria-label={`Toggle ${text}`} className="flex w-[15px] shrink-0 justify-center">
      <svg viewBox="0 0 10 10" className={`size-[10px] ${open ? "rotate-90" : ""}`} aria-hidden="true">
        <path d="M2 0l6 5-6 5z" fill="#3c3c3c" stroke="#222" />
      </svg>
    </button>
    <span className="ml-[4px] flex"><Check id={id} /></span>
    <label htmlFor={id} className="ml-2"><Mnemonic text={text} at={at} /></label>
  </div>
);

function JoinDialog() {
  return (
    <section role="dialog" aria-label="Add Vector Join" className="absolute top-[61px] left-[403px] flex h-[570px] w-[475px] flex-col border border-[#6e6e6e] bg-[#efefef] text-black shadow-[0_6px_18px_rgba(0,0,0,0.45)]">
      <div className="flex h-7 shrink-0 items-center bg-white pr-[9px] pl-[7px]">
        <QLogo />
        <h2 className="ml-1 grow">Add Vector Join</h2>
        <button aria-label="Close"><XMark cls="text-black" /></button>
      </div>
      <form className={`flex grow flex-col px-[10px] pt-[11px] pb-[10px] ${compact}`}>
        <div className="flex flex-col gap-[6px]">
          <Combo
            id="join-layer"
            label="Join layer"
            value="AKWA IBOM STATE LGAS"
            icon={
              <svg viewBox="0 0 16 12" className="w-4" aria-hidden="true">
                <path d="M1 4c.5-3 3-3.500 5.500-2.500s4.500.5 6.500-.5c2.500-.3 2.500 3 1.800 4.500s.7 3.500-1.300 4.300-3-1.300-5-1.300-3 1.200-4.500 1.300C1.500 9.800.7 6.500 1 4z" fill="#e0e0e0" stroke="#999" />
              </svg>
            }
          />
          <Combo id="join-field" label="Join field" value="" />
          <Combo id="target-field" label="Target field" value="" />
        </div>
        <div className="mt-1">
          <TickRow id="cache" text="Cache join layer in memory" on />
          <TickRow id="index" text="Create attribute index on join field" />
          <TickRow id="dynamic" text="Dynamic form" />
          <FoldRow id="editable" text="Editable join layer" at={3} />
          <FoldRow id="joined" text="Joined fields" at={0} />
          <FoldRow id="prefix" text="Custom field name prefix" at={13} open />
        </div>
        <fieldset className="ml-px border border-[#d2d2d2] p-[9px]">
          <input aria-label="Custom field name prefix" disabled defaultValue="AKWA IBOM STATE LGAS_" className="h-[21px] w-full rounded-[3px] border border-[#b0b0b0] bg-[#efefef] px-[2px] text-[#8a8a8a]" />
        </fieldset>
        <div className="mt-auto flex justify-end gap-[6px]">
          <Push off>OK</Push>
          <Push>Cancel</Push>
        </div>
      </form>
    </section>
  );
}

function MiniWindow() {
  return (
    <section className="absolute top-[694px] left-[6px] flex h-5 w-[137px] items-center border border-[#a8a8a8] bg-white pr-4 pl-2 text-[#888] shadow-[0_1px_8px_rgba(0,0,0,0.4)]">
      <span className="flex pt-1"><QLogo cls="size-[15px]" /></span>
      <button aria-label="Restore" className="mr-8 flex">
        <svg viewBox="0 0 11 11" className="size-[11px]" fill="none" stroke="#888"><path d="M.5 3.500h7v7h-7zM3 3V.5h7v7H8" /></svg>
      </button>
      <button aria-label="Maximize" className="mr-auto flex">
        <svg viewBox="0 0 11 11" className="size-[11px]" fill="none" stroke="#888"><path d="M.5.5h10v10H.5z" /></svg>
      </button>
      <button aria-label="Close"><XMark cls="text-[#888]" /></button>
    </section>
  );
}

export default function App() {
  return (
    <div className="relative flex h-screen min-h-[640px] flex-col overflow-hidden bg-[#efefef] font-['Open_Sans','Noto_Sans',sans-serif] text-[11px] leading-4">
      <TopBars />
      <main className="flex min-h-0 grow">
        <SideBar />
        <LayersPanel />
        <div className="ml-[6px] grow border border-[#b9b9b9] bg-white" />
        <Toolbox />
      </main>
      <StatusBar />
      <div className="h-[3px] shrink-0 bg-[#2c2c30]" />
      <LayerProperties />
      <JoinDialog />
      <MiniWindow />
    </div>
  );
}
